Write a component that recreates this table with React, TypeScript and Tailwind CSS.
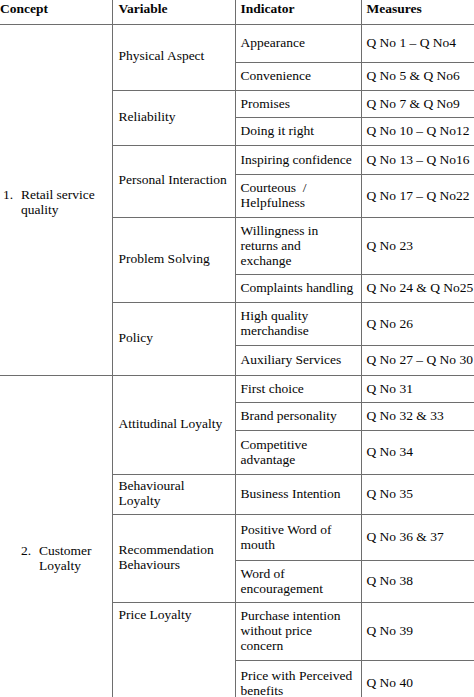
import React from 'react';

type Row = { indicator: string[]; measure: string; h: number };
type Variable = { name: string[]; top?: boolean; rows: Row[] };
type Concept = { num: string; label: string[]; indent: string; pad: string; vars: Variable[] };

const data: Concept[] = [
  {
    num: '1.',
    label: ['Retail service', 'quality'],
    indent: 'pl-[3px]',
    pad: 'pt-[4px]',
    vars: [
      {
        name: ['Physical Aspect'],
        rows: [
          { indicator: ['Appearance'], measure: 'Q No 1 – Q No4', h: 38 },
          { indicator: ['Convenience'], measure: 'Q No 5 & Q No6', h: 28 },
        ],
      },
      {
        name: ['Reliability'],
        rows: [
          { indicator: ['Promises'], measure: 'Q No 7 & Q No9', h: 27 },
          { indicator: ['Doing it right'], measure: 'Q No 10 – Q No12', h: 28 },
        ],
      },
      {
        name: ['Personal Interaction'],
        rows: [
          { indicator: ['Inspiring confidence'], measure: 'Q No 13 – Q No16', h: 29 },
          { indicator: ['Courteous  /', 'Helpfulness'], measure: 'Q No 17 – Q No22', h: 43 },
        ],
      },
      {
        name: ['Problem Solving'],
        rows: [
          { indicator: ['Willingness in', 'returns and', 'exchange'], measure: 'Q No 23', h: 57 },
          { indicator: ['Complaints handling'], measure: 'Q No 24 & Q No25', h: 28 },
        ],
      },
      {
        name: ['Policy'],
        rows: [
          { indicator: ['High quality', 'merchandise'], measure: 'Q No 26', h: 43 },
          { indicator: ['Auxiliary Services'], measure: 'Q No 27 – Q No 30', h: 30 },
        ],
      },
    ],
  },
  {
    num: '2.',
    label: ['Customer', 'Loyalty'],
    indent: 'pl-[21px]',
    pad: 'pt-[34px]',
    vars: [
      {
        name: ['Attitudinal Loyalty'],
        rows: [
          { indicator: ['First choice'], measure: 'Q No 31', h: 27 },
          { indicator: ['Brand personality'], measure: 'Q No 32 & 33', h: 28 },
          { indicator: ['Competitive', 'advantage'], measure: 'Q No 34', h: 44 },
        ],
      },
      {
        name: ['Behavioural', 'Loyalty'],
        rows: [{ indicator: ['Business Intention'], measure: 'Q No 35', h: 40 }],
      },
      {
        name: ['Recommendation', 'Behaviours'],
        rows: [
          { indicator: ['Positive Word of', 'mouth'], measure: 'Q No 36 & 37', h: 46 },
          { indicator: ['Word of', 'encouragement'], measure: 'Q No 38', h: 42 },
        ],
      },
      {
        name: ['Price Loyalty'],
        top: true,
        rows: [
          { indicator: ['Purchase intention', 'without price', 'concern'], measure: 'Q No 39', h: 58 },
          { indicator: ['Price with Perceived', 'benefits'], measure: 'Q No 40', h: 46 },
        ],
      },
    ],
  },
];

const Lines = ({ lines }: { lines: string[] }) => (
  <>
    {lines.map((l, i) => (
      <div key={i} className="whitespace-pre">
        {l}
      </div>
    ))}
  </>
);

const App = () => {
  const body: React.ReactNode[] = [];
  data.forEach((c, ci) => {
    const conceptSpan = c.vars.reduce((n, v) => n + v.rows.length, 0);
    c.vars.forEach((v, vi) => {
      v.rows.forEach((r, ri) => {
        body.push(
          <tr key={`${ci}-${vi}-${ri}`} style={{ height: r.h }}>
            {vi === 0 && ri === 0 && (
              <td rowSpan={conceptSpan} className={`border-r-[1.5px] border-b-[1.5px] border-[#6e6e6e] align-middle p-0 ${c.pad}`}>
                <div className={`flex ${c.indent}`}>
                  <span className="w-[18px] shrink-0">{c.num}</span>
                  <div>
                    <Lines lines={c.label} />
                  </div>
                </div>
              </td>
            )}
            {ri === 0 && (
              <td
                rowSpan={v.rows.length}
                className={`border-[1.5px] border-[#6e6e6e] pl-[6px] pr-1 ${v.top ? 'align-top pt-[4px]' : 'align-middle pb-[3px]'}`}
              >
                <Lines lines={v.name} />
              </td>
            )}
            <td className="border-[1.5px] border-[#6e6e6e] pl-[5px] pr-1 align-middle pb-px">
              <Lines lines={r.indicator} />
            </td>
            <td className="border-t-[1.5px] border-b-[1.5px] border-l-[1.5px] border-[#6e6e6e] pl-[5px] align-middle whitespace-nowrap pb-px">
              {r.measure}
            </td>
          </tr>
        );
      });
    });
  });

  return (
    <div className="w-[474px] h-[697px] overflow-hidden bg-white text-[#050505] font-[family-name:Liberation_Serif,Times_New_Roman,serif] text-[13.5px] leading-[15px]">
      <table className="table-fixed w-[490px] border-collapse">
        <colgroup>
          <col className="w-[112px]" />
          <col className="w-[123px]" />
          <col className="w-[126px]" />
          <col className="w-[129px]" />
        </colgroup>
        <thead>
          <tr className="h-[24px] font-bold">
            <th className="text-left align-top pt-px pl-0 border-r-[1.5px] border-b-[1.5px] border-[#6e6e6e] font-bold">Concept</th>
            <th className="text-left align-top pt-px pl-[6px] border-r-[1.5px] border-b-[1.5px] border-[#6e6e6e] font-bold">Variable</th>
            <th className="text-left align-top pt-px pl-[5px] border-r-[1.5px] border-b-[1.5px] border-[#6e6e6e] font-bold">Indicator</th>
            <th className="text-left align-top pt-px pl-[5px] border-b-[1.5px] border-[#6e6e6e] font-bold">Measures</th>
          </tr>
        </thead>
        <tbody>{body}</tbody>
      </table>
    </div>
  );
};

export default App;
